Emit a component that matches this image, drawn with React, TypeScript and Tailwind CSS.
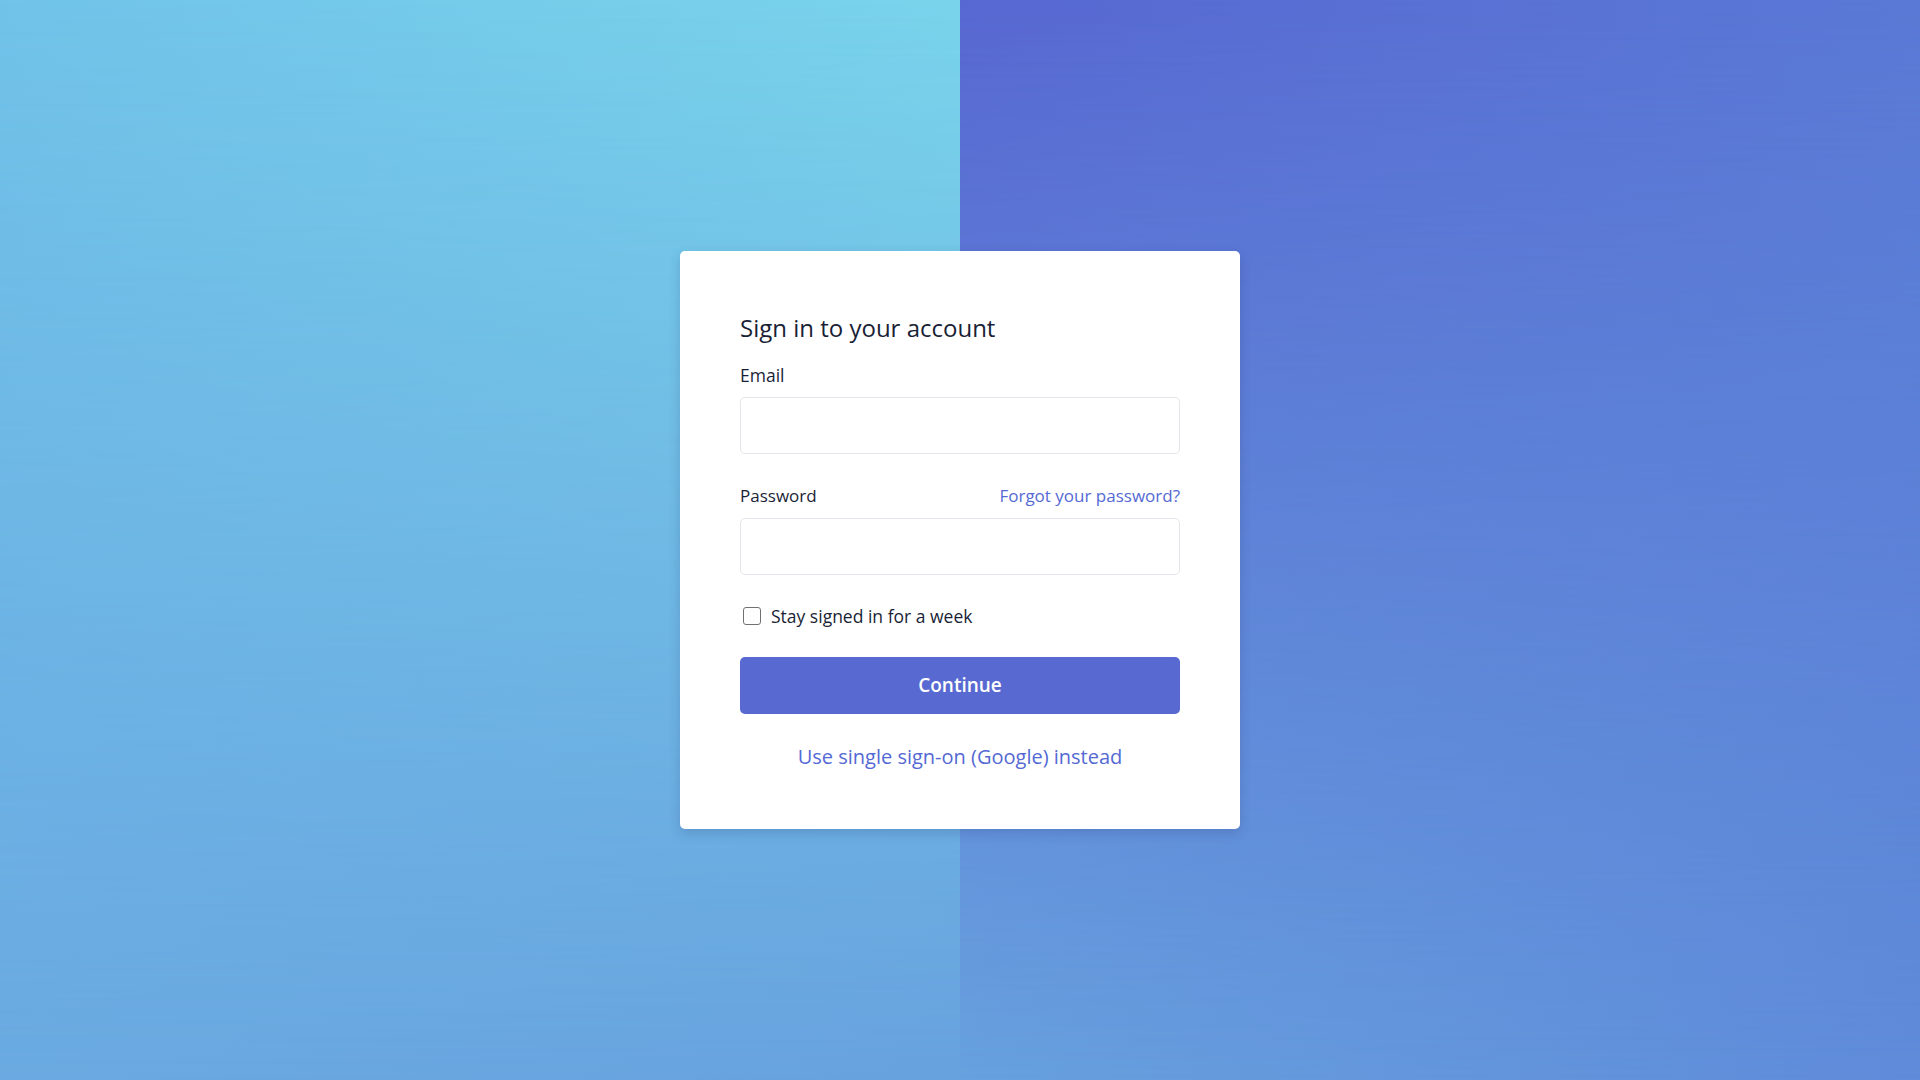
export default function App() {
  return (
    <div className="relative h-screen w-full overflow-hidden font-['Open_Sans','Noto_Sans',sans-serif]">
      {/* background halves */}
      <div className="absolute inset-0 flex">
        <div className="relative flex-1 bg-[linear-gradient(to_right,#71c3e9,#79d4eb)]">
          <div className="absolute inset-0 bg-[linear-gradient(to_right,#6aa9e1,#67a1de)] [mask-image:linear-gradient(to_bottom,transparent,black)]" />
        </div>
        <div className="relative flex-1 bg-[linear-gradient(to_right,#5868d2,#5a79d6)]">
          <div className="absolute inset-0 bg-[linear-gradient(to_right,#67a1de,#5f8bd9)] [mask-image:linear-gradient(to_bottom,transparent,black)]" />
        </div>
      </div>

      <div className="relative flex h-full items-center justify-center">
        <div className="w-[560px] rounded-[5px] bg-white px-[60px] pt-[61px] pb-[58px] shadow-[0_4px_12px_rgba(30,40,90,0.18)]">
          <h1 className="mb-[19px] text-[24px] leading-[32px] font-normal text-[#1a1f36]">
            Sign in to your account
          </h1>

          <label className="mb-[10px] block text-[17.5px] leading-[24px] font-medium text-[#1a1f36]">
            Email
          </label>
          <input
            type="email"
            className="block h-[57px] w-full rounded-[5px] border border-[#e3e6ea] bg-white px-4 outline-none"
          />

          <div className="mt-[30px] mb-[10px] flex items-center justify-between text-[17px] leading-[24px] font-medium">
            <span className="text-[#1a1f36]">Password</span>
            <a href="#" className="text-[#5469d4]">
              Forgot your password?
            </a>
          </div>
          <input
            type="password"
            className="block h-[57px] w-full rounded-[5px] border border-[#e3e6ea] bg-white px-4 outline-none"
          />

          <label className="mt-[29px] flex items-center gap-[10px] pl-[3px] text-[17.5px] leading-[24px] text-[#1a1f36]">
            <span className="h-[18px] w-[18px] shrink-0 rounded-[3px] border-[1.5px] border-[#707070] bg-white" />
            Stay signed in for a week
          </label>

          <button className="mt-[29px] flex h-[57px] w-full items-center justify-center rounded-[5px] bg-[#586ad1] text-[19px] font-semibold text-white">
            Continue
          </button>

          <div className="mt-[29px] text-center text-[20px] leading-[28px] font-medium">
            <a href="#" className="text-[#5469d4]">
              Use single sign-on (Google) instead
            </a>
          </div>
        </div>
      </div>
    </div>
  );
}
